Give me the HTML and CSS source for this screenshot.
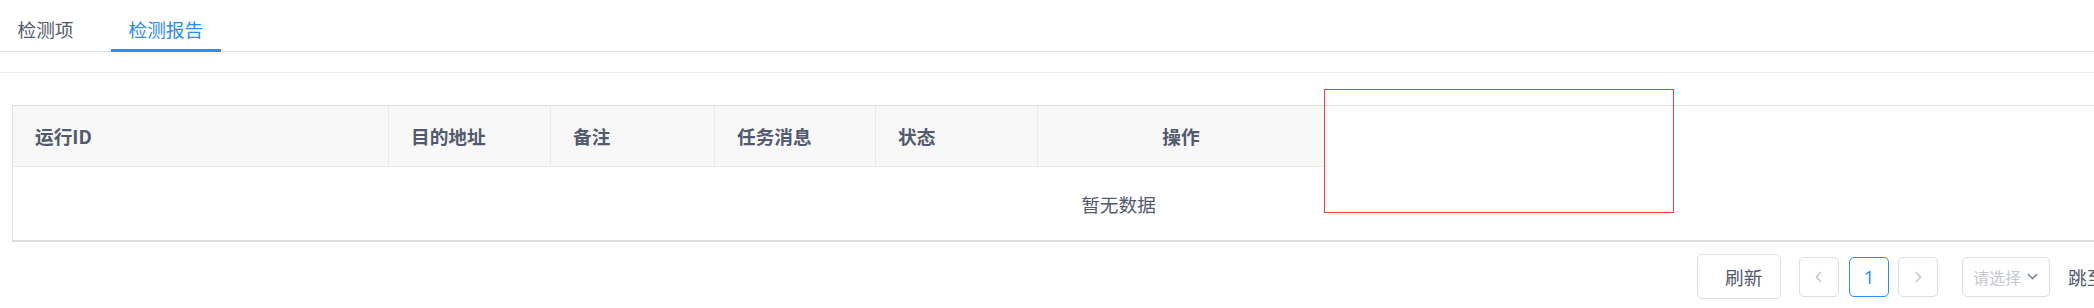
FILE: index.html
```html
<!DOCTYPE html>
<html lang="zh-CN">
<head>
    <meta charset="UTF-8">
    <meta name="viewport" content="width=device-width, initial-scale=1.0">
    <title>检测报告</title>
    <link rel="stylesheet" href="styles.css">
</head>
<body>
    <div class="page">
        <div class="tabs">
            <div class="tab">检测项</div>
            <div class="tab active">检测报告</div>
        </div>
        <div class="divider"></div>

        <div class="table">
            <div class="thead">
                <div class="th col-id">运行ID</div>
                <div class="th col-addr">目的地址</div>
                <div class="th col-note">备注</div>
                <div class="th col-msg">任务消息</div>
                <div class="th col-state">状态</div>
                <div class="th col-op">操作</div>
            </div>
            <div class="empty">暂无数据</div>
        </div>

        <div class="pager">
            <button class="btn refresh">刷新</button>
            <div class="page-item prev">
                <svg width="8" height="12" viewBox="0 0 8 12"><polyline points="6,1 1.5,6 6,11" fill="none" stroke="#c5c8ce" stroke-width="1.6"/></svg>
            </div>
            <div class="page-item current">1</div>
            <div class="page-item next">
                <svg width="8" height="12" viewBox="0 0 8 12"><polyline points="2,1 6.5,6 2,11" fill="none" stroke="#c5c8ce" stroke-width="1.6"/></svg>
            </div>
            <div class="select">
                <span class="placeholder">请选择</span>
                <svg width="11" height="7" viewBox="0 0 11 7"><polyline points="1,1 5.5,5.5 10,1" fill="none" stroke="#808695" stroke-width="1.6"/></svg>
            </div>
            <div class="elevator">
                跳至
                <input type="text" class="jump">
                页
            </div>
        </div>

        <!-- highlight box drawn over the table -->
        <div class="mark"></div>
    </div>
</body>
</html>
```

FILE: styles.css
```css
* {
    box-sizing: border-box;
    margin: 0;
    padding: 0;
}
html, body {
    width: 100%;
    height: 100%;
    overflow: hidden;
    background: #fff;
}
body {
    font-family: "Noto Sans CJK SC", "Microsoft YaHei", sans-serif;
    font-size: 18.67px;
    color: #515a6e;
}
.page {
    position: relative;
    width: 2236px;
}
.tabs {
    display: flex;
    height: 52px;
    box-shadow: inset 0 -1px 0 #dcdee2;
}
.tab {
    padding: 14px 17.5px 5px;
    line-height: 30px;
    margin-right: 20px;
    border-bottom: 3px solid transparent;
    cursor: pointer;
}
.tab.active {
    color: #2d8cf0;
    border-bottom-color: #2d8cf0;
}
.divider {
    margin-top: 20px;
    border-top: 1px solid #e8eaec;
}
.table {
    margin: 32px 0 0 12px;
    width: 2212px;
    border-top: 1px solid #dcdee2;
    border-left: 1px solid #dcdee2;
    border-bottom: 2px solid #dcdee2;
}
.thead {
    display: flex;
    width: 1311px;
    height: 61px;
    background: #f8f8f9;
    border-bottom: 1px solid #e8eaec;
}
.th {
    padding: 0 22px;
    line-height: 60px;
    font-weight: 700;
    border-right: 1px solid #e8eaec;
    white-space: nowrap;
}
.col-id { width: 376px; }
.col-addr { width: 162px; }
.col-note { width: 164px; }
.col-msg { width: 161px; }
.col-state { width: 162px; }
.col-op {
    width: 286px;
    text-align: center;
    border-right: none;
}
.empty {
    height: 73px;
    line-height: 73px;
    text-align: center;
}
.pager {
    display: flex;
    align-items: center;
    justify-content: flex-end;
    margin-top: 12px;
    padding-right: 26px;
}
.btn {
    height: 45px;
    width: 84px;
    padding: 0 16px 0 27px;
    font-family: inherit;
    font-size: 18.67px;
    color: #515a6e;
    background: #fff;
    border: 1px solid #dcdee2;
    border-radius: 5px;
    margin-right: 18px;
    text-align: left;
    white-space: nowrap;
}
.page-item {
    width: 40px;
    height: 40px;
    display: flex;
    align-items: center;
    justify-content: center;
    border: 1px solid #dcdee2;
    border-radius: 5px;
    margin-right: 10px;
    font-family: "Open Sans", sans-serif;
    font-size: 18.67px;
}
.page-item.current {
    border-color: #2d8cf0;
    color: #2d8cf0;
    margin-right: 9px;
}
.page-item.next {
    margin-right: 24px;
}
.select {
    width: 88px;
    height: 40px;
    display: flex;
    align-items: center;
    gap: 6px;
    padding-left: 10px;
    border: 1px solid #dcdee2;
    border-radius: 5px;
    margin-right: 18px;
}
.placeholder {
    color: #c5c8ce;
    font-size: 16px;
}
.elevator {
    display: flex;
    align-items: center;
    white-space: nowrap;
    gap: 10px;
}
.jump {
    width: 66px;
    height: 40px;
    border: 1px solid #dcdee2;
    border-radius: 5px;
}
.mark {
    position: absolute;
    left: 1324px;
    top: 89px;
    width: 350px;
    height: 124px;
    border: 1px solid #f03c3c;
}
```
